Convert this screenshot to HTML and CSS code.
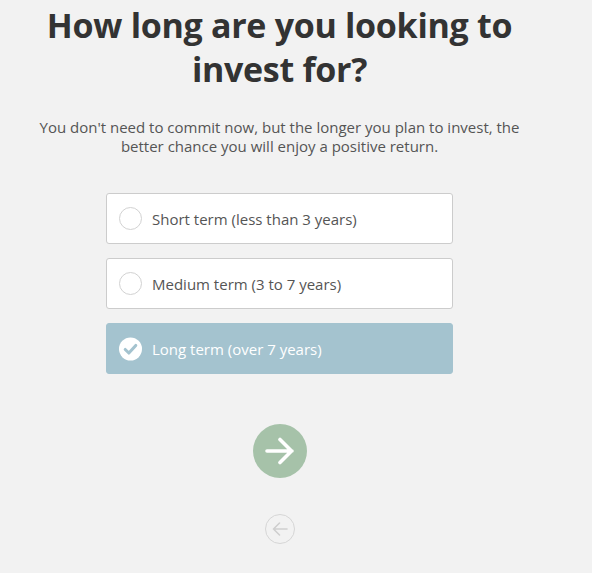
FILE: index.html
```html
<!DOCTYPE html>
<html lang="en">
<head>
  <meta charset="UTF-8" />
  <meta name="viewport" content="width=device-width, initial-scale=1.0"/>
  <title>Investment Horizon</title>
  <link rel="stylesheet" href="styles.css">
</head>
<body>
  <div class="container">
    <h1>How long are you looking to invest for?</h1>
    <p class="intro">You don't need to commit now, but the longer you plan to invest, the better chance you will enjoy a positive return.</p>

    <div class="options">
      <label class="option">
        <span class="radio"></span>
        <span class="text">Short term (less than 3 years)</span>
      </label>
      <label class="option">
        <span class="radio"></span>
        <span class="text">Medium term (3 to 7 years)</span>
      </label>
      <label class="option selected">
        <span class="radio">
          <svg viewBox="0 0 24 24" width="24" height="24">
            <circle cx="12" cy="12" r="12" fill="#fff"/>
            <path d="M6.5 12.5 L10.3 16.2 L17.5 8.3" fill="none" stroke="#a4c3cf" stroke-width="3.2" stroke-linecap="round" stroke-linejoin="round"/>
          </svg>
        </span>
        <span class="text">Long term (over 7 years)</span>
      </label>
    </div>

    <div class="nav">
      <button type="button" class="next" aria-label="Next">
        <svg viewBox="0 0 30 28" width="30" height="28">
          <path d="M2 14 H27 M15 2.5 L26.5 14 L15 25.5" fill="none" stroke="#fff" stroke-width="3.6" stroke-linecap="round" stroke-linejoin="round"/>
        </svg>
      </button>
      <button type="button" class="back" aria-label="Back">
        <svg viewBox="0 0 16 14" width="16" height="14">
          <path d="M15 7 H1.5 M7.5 1 L1.5 7 L7.5 13" fill="none" stroke="#cfcfcf" stroke-width="1.6" stroke-linecap="round" stroke-linejoin="round"/>
        </svg>
      </button>
    </div>
  </div>
</body>
</html>
```

FILE: styles.css
```css
body {
  font-family: "Open Sans", Lato, sans-serif;
  background: #f2f2f2;
  margin: 0;
  padding: 0;
}
.container {
  width: 559px;
  text-align: center;
}
h1 {
  margin: 3px 0 0 0;
  font-size: 34px;
  line-height: 44px;
  font-weight: 700;
  color: #333333;
  padding: 0 40px;
  letter-spacing: -0.3px;
}
.intro {
  margin: 27px 0 0 0;
  font-size: 15px;
  line-height: 19px;
  color: #555555;
  padding: 0 30px;
}
.options {
  width: 347px;
  margin: 37px auto 0 auto;
  display: flex;
  flex-direction: column;
  gap: 14px;
}
.option {
  display: flex;
  align-items: center;
  height: 51px;
  box-sizing: border-box;
  padding-left: 12px;
  background: #ffffff;
  border: 1px solid #cccccc;
  border-radius: 3px;
  cursor: pointer;
  font-size: 15px;
  color: #555555;
}
.radio {
  width: 23px;
  height: 23px;
  box-sizing: border-box;
  border: 1px solid #d2d2d2;
  border-radius: 50%;
  margin-right: 10px;
  display: flex;
  align-items: center;
  justify-content: center;
}
.option.selected {
  background: #a4c3cf;
  border-color: #a4c3cf;
  color: #ffffff;
}
.option.selected .radio {
  border: none;
}
.nav {
  display: flex;
  flex-direction: column;
  align-items: center;
  margin-top: 50px;
  gap: 36px;
}
button {
  border-radius: 50%;
  padding: 0;
  display: flex;
  align-items: center;
  justify-content: center;
  cursor: pointer;
}
.next {
  width: 54px;
  height: 54px;
  border: none;
  background: #a6c2a9;
}
.back {
  width: 30px;
  height: 30px;
  border: 1px solid #d6d6d6;
  background: transparent;
}
```
